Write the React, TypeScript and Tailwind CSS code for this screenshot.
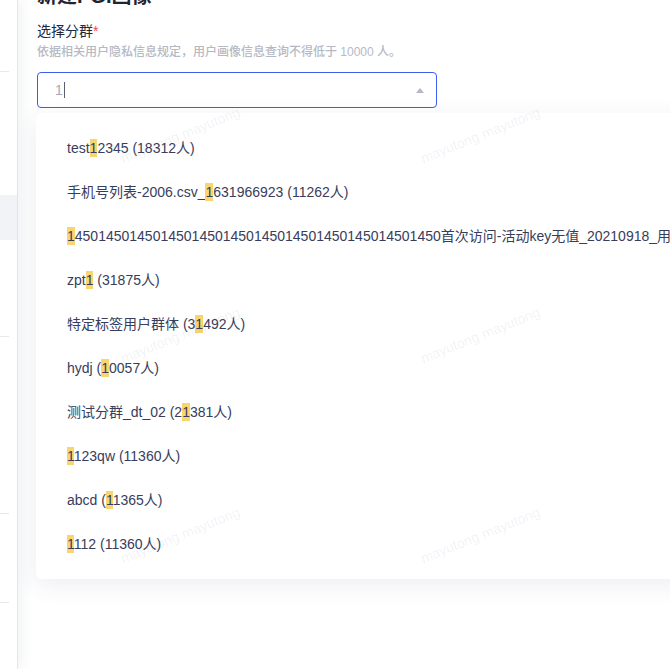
import React from 'react';

type Group = { pre: string; hit: string; post: string };

// search "1" – each option splits around the first match
const OPTIONS: Group[] = [
  { pre: 'test', hit: '1', post: '2345 (18312人)' },
  { pre: '手机号列表-2006.csv_', hit: '1', post: '631966923 (11262人)' },
  {
    pre: '',
    hit: '1',
    post: '1450'.repeat(12).slice(1) + '首次访问-活动key无值_20210918_用户群体 (10231人)',
  },
  { pre: 'zpt', hit: '1', post: ' (31875人)' },
  { pre: '特定标签用户群体 (3', hit: '1', post: '492人)' },
  { pre: 'hydj (', hit: '1', post: '0057人)' },
  { pre: '测试分群_dt_02 (2', hit: '1', post: '381人)' },
  { pre: '', hit: '1', post: '123qw (11360人)' },
  { pre: 'abcd (', hit: '1', post: '1365人)' },
  { pre: '', hit: '1', post: '112 (11360人)' },
];

const Sidebar = () => (
  <aside className="relative z-10 w-[18px] shrink-0 bg-white border-r border-[#e4e6ec] shadow-[3px_0_14px_rgba(40,50,90,0.07)] flex flex-col">
    <div className="mt-[71px] h-px w-[9px] bg-[#e6e8ee]" />
    <div className="mt-[123px] h-[45px] w-full bg-[#f2f3f7]" />
    <div className="mt-[96px] h-px w-[9px] bg-[#e6e8ee]" />
    <div className="mt-[176px] h-px w-[9px] bg-[#e6e8ee]" />
    <div className="mt-[88px] h-px w-[9px] bg-[#e6e8ee]" />
  </aside>
);

const Watermark = () => (
  <div className="pointer-events-none absolute left-[30px] top-[35px] z-30 grid grid-cols-[repeat(2,300px)] grid-rows-[repeat(3,200px)]">
    {Array.from({ length: 6 }).map((_, i) => (
      <div key={i} className="flex items-center justify-center">
        <span className="-rotate-[22deg] whitespace-nowrap text-[14px] text-[rgba(60,70,100,0.08)]">
          mayutong mayutong
        </span>
      </div>
    ))}
  </div>
);

export default function App() {
  return (
    <div className="relative flex w-[670px] h-[669px] overflow-hidden bg-white font-['Liberation_Sans','Noto_Sans_CJK_SC',sans-serif]">
      <Sidebar />
      <main className="flex-1 pl-[19px]">
        <h1 className="mt-[-18px] text-[20px] leading-[28px] font-bold text-[#1f2333]">新建PGI画像</h1>
        <div className="mt-[11px] text-[14px] leading-[20px] text-[#23273a]">
          选择分群<span className="text-[#f0445a]">*</span>
        </div>
        <p className="mt-[2px] text-[12px] leading-[18px] font-medium text-[#b5b9c4]">
          依据相关用户隐私信息规定，用户画像信息查询不得低于 10000 人。
        </p>

        <div className="relative mt-[11px] w-[400px]">
          <div className="flex h-[36px] items-center justify-between rounded-[4px] border border-[#3d5cf0] pl-[17px] pr-[12px]">
            <div className="flex items-center text-[14px] text-[#a4a9b6]">
              <span>1</span>
              <span className="ml-[1px] h-[16px] w-px bg-[#5a5e6e]" />
            </div>
            <span className="h-0 w-0 border-x-[4.5px] border-b-[5px] border-x-transparent border-b-[#b4b8c6]" />
          </div>

          <ul className="absolute left-[-1px] top-full mt-[5px] w-[700px] rounded-[6px] bg-white py-[13px] shadow-[0_6px_24px_rgba(40,50,100,0.09)] z-20">
            {OPTIONS.map((o, i) => (
              <li key={i} className="h-[44px] leading-[44px] whitespace-nowrap pl-[31px] text-[14px] text-[#383d5b]">
                {o.pre}
                <mark className="bg-[#f9d56f] text-[#383d5b] py-[1px]">{o.hit}</mark>
                {o.post}
              </li>
            ))}
          </ul>
        </div>
      </main>
      <Watermark />
    </div>
  );
}
